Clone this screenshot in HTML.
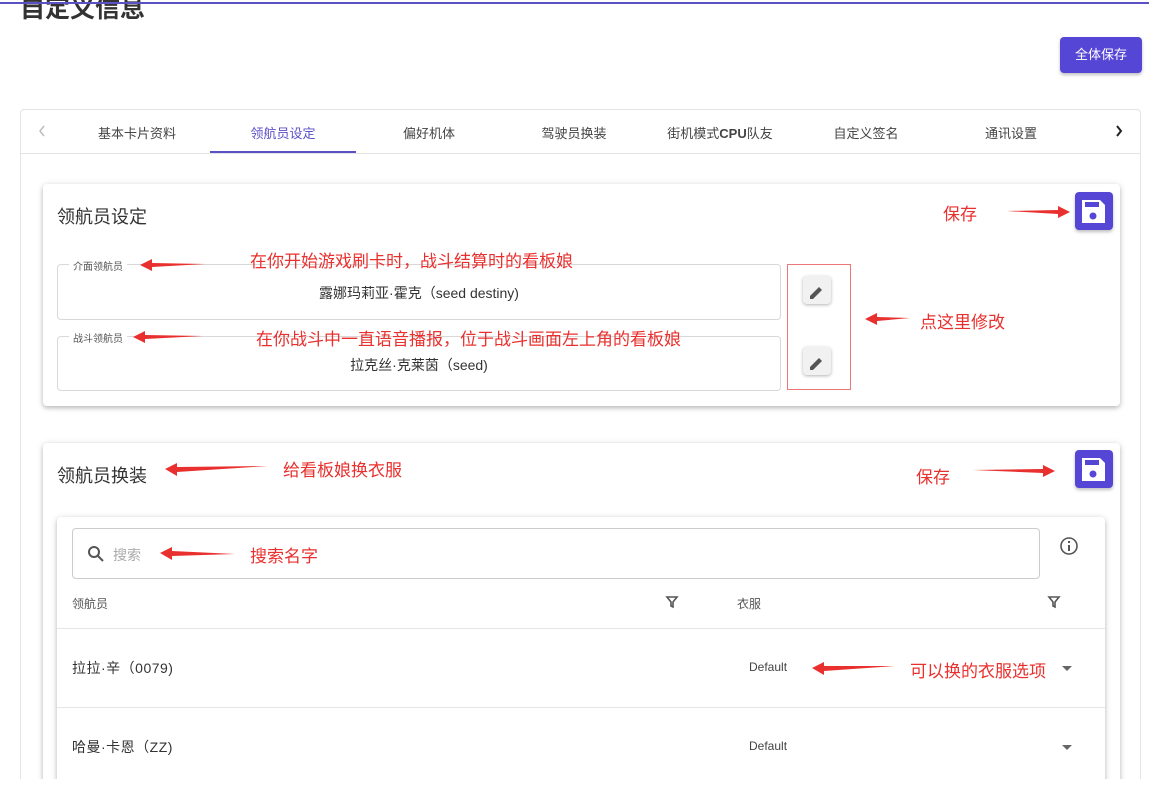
<!DOCTYPE html>
<html><head><meta charset="utf-8"><style>
*{margin:0;padding:0;box-sizing:border-box}
html,body{width:1149px;height:794px;overflow:hidden}
body{background:#fff;position:relative;font-family:"Liberation Sans","Noto Sans CJK SC",sans-serif;color:#333}
.a{position:absolute}
.red{color:#e8302e;font-size:17px;position:absolute;white-space:nowrap}
.card{position:absolute;background:#fff;border-radius:4px;box-shadow:0 2px 4px rgba(0,0,0,.2),0 1px 8px rgba(0,0,0,.12)}
.tab{position:absolute;top:123px;font-size:13px;color:#444;text-align:center;width:146px}
.fs{position:absolute;border:1px solid #d8d8d8;border-radius:4px}
.lg{position:absolute;background:#fff;font-size:10px;color:#555;padding:0 4px}
.savebtn{position:absolute;width:38px;height:38px;background:#5646d6;border-radius:4px;box-shadow:0 2px 3px rgba(0,0,0,.25)}
.pen{position:absolute;width:28px;height:28px;background:#f1f1f1;border-radius:4px;box-shadow:0 1px 3px rgba(0,0,0,.3)}
</style></head><body>
<div class="a" style="left:20px;top:-11px;font-size:25px;font-weight:bold;color:#333">自定义信息</div>
<div class="a" style="left:0;top:2px;width:1149px;height:2px;background:#5b50c8"></div>
<div class="a" style="left:1060px;top:37px;width:82px;height:36px;background:#5646d6;border-radius:4px;color:#fff;font-size:13px;line-height:36px;text-align:center;box-shadow:0 2px 3px rgba(0,0,0,.25)">全体保存</div>

<div class="a" style="left:20px;top:109px;width:1121px;height:690px;border:1px solid #e4e4e4;border-radius:4px"></div>
<div class="a" style="left:21px;top:153px;width:1119px;height:1px;background:#e4e4e4"></div>
<div class="tab" style="left:64px">基本卡片资料</div>
<div class="tab" style="left:210px;color:#5b50c8">领航员设定</div>
<div class="tab" style="left:356px">偏好机体</div>
<div class="tab" style="left:501px">驾驶员换装</div>
<div class="tab" style="left:647px">街机模式<b>CPU</b>队友</div>
<div class="tab" style="left:793px">自定义签名</div>
<div class="tab" style="left:938px">通讯设置</div>
<div class="a" style="left:210px;top:151px;width:146px;height:2px;background:#5b50c8"></div>

<div class="card" style="left:43px;top:184px;width:1077px;height:222px"></div>
<div class="a" style="left:57px;top:203px;font-size:18px;color:#333">领航员设定</div>
<div class="fs" style="left:57px;top:264px;width:724px;height:56px"></div>
<div class="lg" style="left:69px;top:258px">介面领航员</div>
<div class="a" style="left:57px;top:283px;width:724px;text-align:center;font-size:14px">露娜玛莉亚·霍克（seed destiny)</div>
<div class="fs" style="left:57px;top:336px;width:724px;height:55px"></div>
<div class="lg" style="left:69px;top:330px">战斗领航员</div>
<div class="a" style="left:57px;top:355px;width:724px;text-align:center;font-size:14px">拉克丝·克莱茵（seed)</div>
<div class="a" style="left:787px;top:264px;width:64px;height:126px;border:1px solid #ee7777"></div>
<div class="pen" style="left:803px;top:276px"></div>
<div class="pen" style="left:803px;top:347px"></div>

<div class="card" style="left:43px;top:443px;width:1077px;height:345px"></div>
<div class="a" style="left:57px;top:462px;font-size:18px;color:#333">领航员换装</div>
<div class="savebtn" style="left:1075px;top:192px"></div>
<div class="savebtn" style="left:1075px;top:450px"></div>
<div class="card" style="left:57px;top:517px;width:1048px;height:280px"></div>
<div class="fs" style="left:72px;top:528px;width:968px;height:51px;border-color:#ccc"></div>
<div class="a" style="left:113px;top:545px;font-size:14px;color:#aaa">搜索</div>
<div class="a" style="left:72px;top:595px;font-size:12px;color:#555">领航员</div>
<div class="a" style="left:737px;top:595px;font-size:12px;color:#555">衣服</div>
<div class="a" style="left:57px;top:628px;width:1048px;height:1px;background:#e6e6e6"></div>
<div class="a" style="left:57px;top:707px;width:1048px;height:1px;background:#e6e6e6"></div>
<div class="a" style="left:72px;top:658px;font-size:14px;color:#333;letter-spacing:.5px">拉拉·辛（0079)</div>
<div class="a" style="left:72px;top:737px;font-size:14px;color:#333;letter-spacing:.5px">哈曼·卡恩（ZZ)</div>
<div class="a" style="left:749px;top:660px;font-size:12px;color:#444">Default</div>
<div class="a" style="left:749px;top:739px;font-size:12px;color:#444">Default</div>

<svg class="a" style="left:0;top:0" width="1149" height="794">
<path d="M44 126l-4 5 4 5" fill="none" stroke="#bbb" stroke-width="1.5"/>
<path d="M1117 126l4 5-4 5" fill="none" stroke="#222" stroke-width="2"/>
<g>
<path d="M1082 200h18l5 5v18h-23z" fill="#fff"/><rect x="1085" y="202" width="14" height="5" fill="#5646d6"/><circle cx="1093" cy="216" r="3.5" fill="#5646d6"/>
<path d="M1082 458h18l5 5v18h-23z" fill="#fff"/><rect x="1085" y="460" width="14" height="5" fill="#5646d6"/><circle cx="1093" cy="474" r="3.5" fill="#5646d6"/>
</g>
<g fill="#555"><path d="M810 296l9-9 3 3-9 9h-3z"/><path d="M810 367l9-9 3 3-9 9h-3z"/></g>
<g fill="none" stroke="#555" stroke-width="2"><circle cx="94" cy="552" r="5"/><path d="M98 556l5 5"/></g>
<circle cx="1069" cy="546" r="8" fill="none" stroke="#555" stroke-width="1.6"/>
<rect x="1068" y="545" width="2" height="6" fill="#555"/><rect x="1068" y="541" width="2" height="2" fill="#555"/>
<g fill="none" stroke="#555" stroke-width="1.6"><path d="M667 597h10l-4 5v5l-2-1v-4z"/><path d="M1049 597h10l-4 5v5l-2-1v-4z"/></g>
<g fill="#666"><path d="M1062 666h10l-5 5z"/><path d="M1062 745h10l-5 5z"/></g>
<g fill="#e8302e">
<path d="M1007 211L1058 210L1058 206L1070 212L1058 218L1058 214Z"/>
<path d="M140 265L152 259L152 263L205 264L152 267L152 271Z"/>
<path d="M133 337L145 331L145 335L203 336L145 339L145 343Z"/>
<path d="M865 319L877 313L877 317L910 318L877 321L877 325Z"/>
<path d="M165 469L177 463L177 467L268 466L177 472L177 476Z"/>
<path d="M973 470L1043 469L1043 465L1055 471L1043 477L1043 473Z"/>
<path d="M160 553L172 547L172 551L235 554L172 556L172 560Z"/>
<path d="M812 668L824 662L824 666L895 666L824 671L824 675Z"/>
</g></svg>
<div class="a" style="left:0;top:779px;width:1149px;height:40px;background:#fff"></div>
<div class="red" style="left:943px;top:200px">保存</div>
<div class="red" style="left:916px;top:463px">保存</div>
<div class="red" style="left:250px;top:247px">在你开始游戏刷卡时，战斗结算时的看板娘</div>
<div class="red" style="left:256px;top:325px">在你战斗中一直语音播报，位于战斗画面左上角的看板娘</div>
<div class="red" style="left:920px;top:308px">点这里修改</div>
<div class="red" style="left:283px;top:456px">给看板娘换衣服</div>
<div class="red" style="left:250px;top:542px">搜索名字</div>
<div class="red" style="left:910px;top:657px">可以换的衣服选项</div>
</body></html>
